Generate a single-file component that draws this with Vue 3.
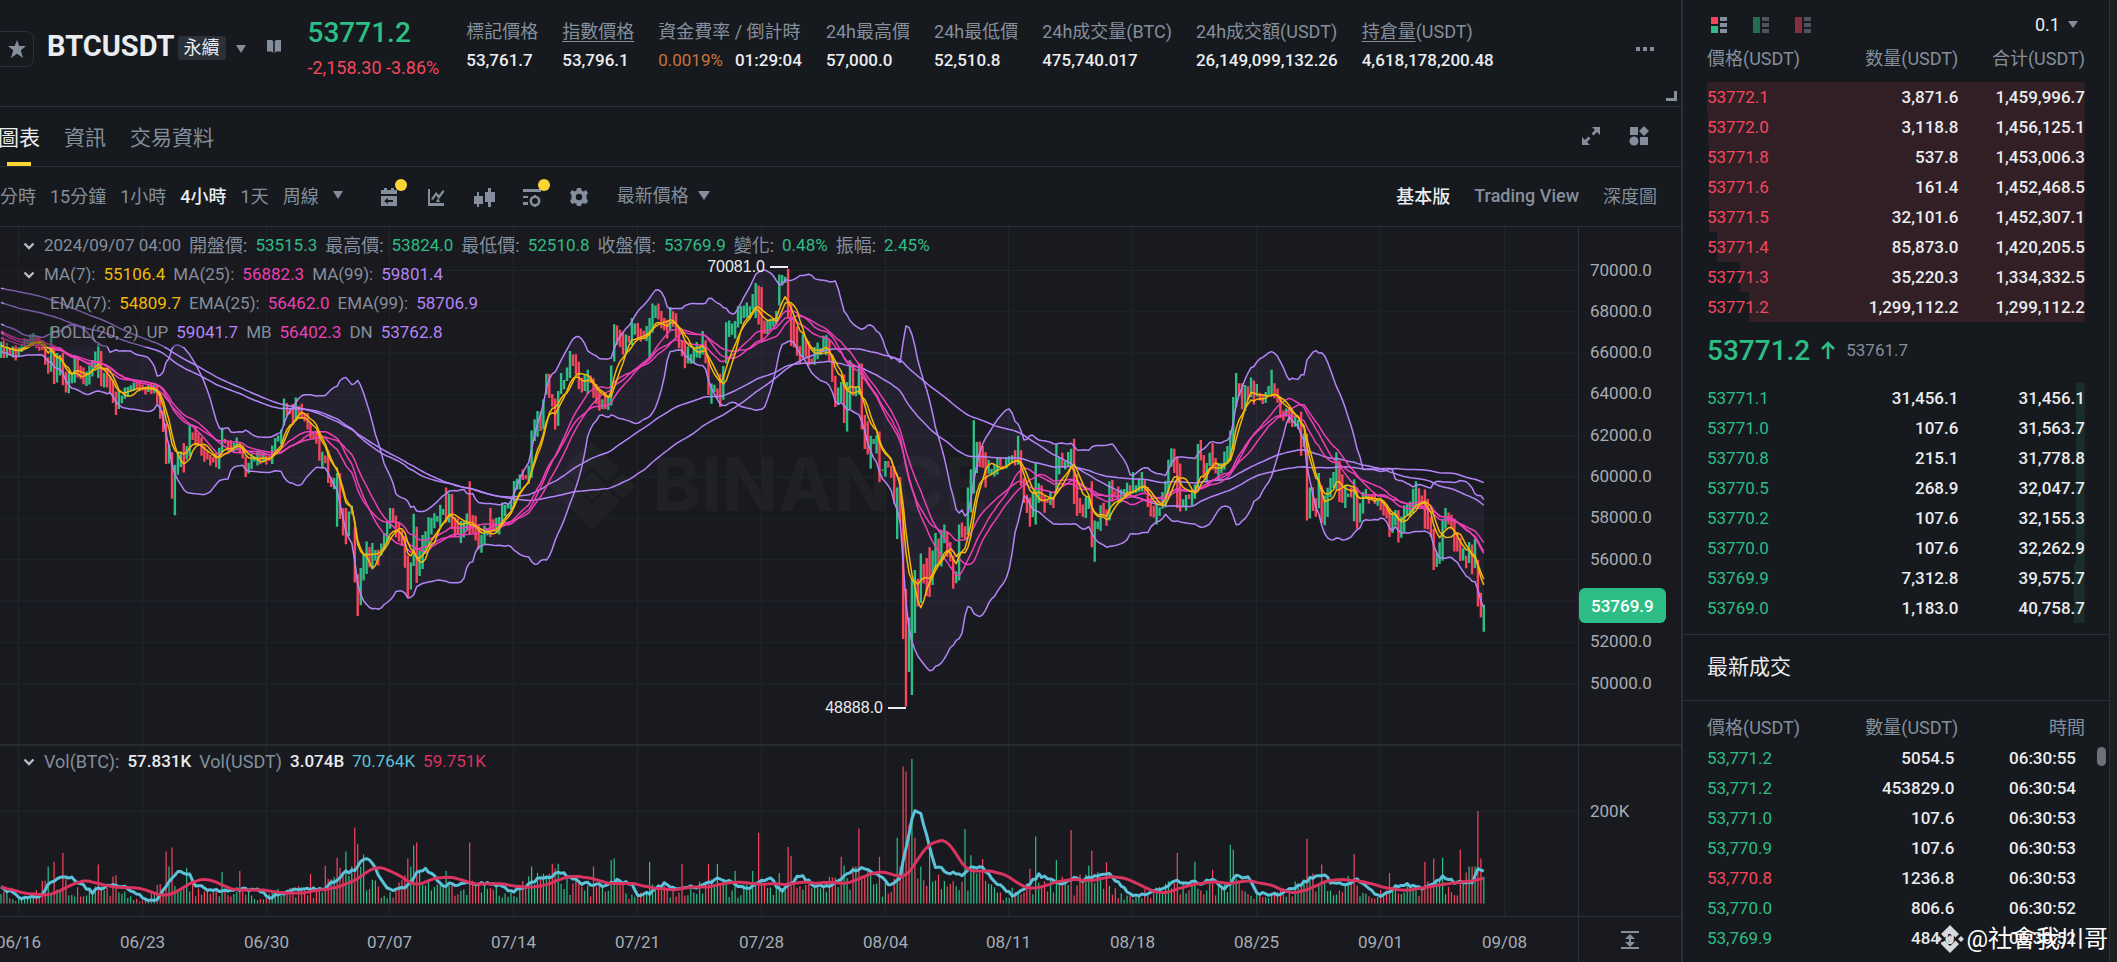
<template>
  <div class="page">
    <main class="market">
      <header class="ticker">
        <button type="button" class="ticker__star" aria-label="收藏">
          <svg width="18" height="18" viewBox="0 0 18 18"><path d="M9 0l2.300 6H18l-5.200 4.200L15 18 9 13.800 3 18l2.200-7.800L0 6h6.700z" /></svg>
        </button>
        <h1>BTCUSDT</h1>
        <span class="ticker__tag">永續</span>
        <button type="button" class="ticker__caret" aria-label="選擇合約">
          <svg width="10" height="8" viewBox="0 0 10 8"><path d="M0 0h10L5 8z" /></svg>
        </button>
        <button type="button" class="ticker__book" aria-label="合約說明">
          <svg width="14" height="13" viewBox="0 0 14 13"><path d="M0 0h4.500l1.700 1v12L4.500 11.500H0zM14 0H9.500L7.800 1v12l1.700-1.500H14z" /></svg>
        </button>
        <div class="ticker__price">
          <strong>53771.2</strong>
          <span>-2,158.30 -3.86%</span>
        </div>
        <dl class="ticker__stats">
          <div v-for="stat in stats" :key="stat.label">
            <dt><span :class="{ underline: stat.underline }">{{ stat.label }}</span>{{ stat.unit }}</dt>
            <dd><em v-if="stat.rate">{{ stat.rate }}</em>{{ stat.value }}</dd>
          </div>
        </dl>
        <button type="button" class="ticker__more" aria-label="更多">
          <svg width="18" height="4" viewBox="0 0 18 4"><path d="M0 0h4v4H0zM7 0h4v4H7zM14 0h4v4h-4z" /></svg>
        </button>
        <svg class="ticker__corner" width="11" height="10" viewBox="0 0 11 10"><path d="M8 0h3v10H0V7h8z" /></svg>
      </header>

      <nav class="tabs">
        <button
          v-for="tab in tabs"
          :key="tab"
          type="button"
          :class="{ active: tab === activeTab }"
          @click="activeTab = tab"
        >
          {{ tab }}
        </button>
        <span class="spacer"></span>
        <button type="button" class="tabs__icon" aria-label="全螢幕">
          <svg width="20" height="20" viewBox="0 0 20 20"><path d="M11 1h8v8l-3-3-3.500 3.500-2-2L14 4zM9 19H1v-8l3 3 3.500-3.500 2 2L6 16z" /></svg>
        </button>
        <button type="button" class="tabs__icon" aria-label="版面設定">
          <svg width="20" height="20" viewBox="0 0 20 20"><path d="M1 1h8v8H1zM15 0l5 5-5 5-5-5zM11 11h8v8h-8z" /><circle cx="5" cy="15" r="4.500" /></svg>
        </button>
      </nav>

      <div class="toolbar">
        <button
          v-for="item in intervals"
          :key="item"
          type="button"
          :class="{ active: item === activeInterval }"
          @click="activeInterval = item"
        >
          {{ item }}
        </button>
        <button type="button" class="toolbar__caret" aria-label="更多週期">
          <svg width="10" height="8" viewBox="0 0 10 8"><path d="M0 0h10L5 8z" /></svg>
        </button>
        <div class="toolbar__icons">
          <button type="button" class="dotted" aria-label="回放">
            <svg width="20" height="20" viewBox="0 0 20 20"><path d="M2 3h3V1h3v2h4V1h3v2h3v4H2z" /><path d="M2 9h16v10H2zm3 5l4 3v-2h5v-2H9v-2z" fill-rule="evenodd" /></svg>
          </button>
          <button type="button" aria-label="畫線工具">
            <svg width="20" height="20" viewBox="0 0 20 20"><path d="M2 2h2v14h14v3H2zM5 12l5-7 3 3 4-5 1.500 1.500L13 12l-3-3.500L7 13zM10 15l2-4 2 4z" /></svg>
          </button>
          <button type="button" aria-label="K線類型">
            <svg width="22" height="20" viewBox="0 0 22 20"><path d="M1 9h3V5h2v4h4v8H6v3H4v-3H1zM12 5h3V1h3v4h4v10h-4v5h-3v-5h-3z" /></svg>
          </button>
          <button type="button" class="dotted" aria-label="指標">
            <svg width="20" height="20" viewBox="0 0 20 20"><path d="M1 2h18v3H1zM1 9h5v2H1zM1 15h5v3H1z" /><circle cx="13" cy="14" r="4.200" fill="none" stroke="currentColor" stroke-width="2.600" /><path d="M12 8h2v3h-2zM12 17h2v3h-2z" /></svg>
          </button>
          <button type="button" aria-label="設定">
            <svg width="20" height="20" viewBox="0 0 20 20"><path fill-rule="evenodd" d="M8 1h4l.6 2.500 2 .9L17 3l2 3-1.500 2v3.500L19 14l-2 3-2.500-1-1.900.9L12 19H8l-.6-2.100-1.900-.9L3 17l-2-3 1.500-2.500V8L1 6l2-3 2.400 1.400 2-.9zM10 6.800a3.200 3.200 0 1 0 0 6.400 3.200 3.200 0 0 0 0-6.400z" /></svg>
          </button>
        </div>
        <label class="picker">
          <select aria-label="價格類型"><option>最新價格</option><option>標記價格</option></select>
          <svg width="12" height="9" viewBox="0 0 12 9"><path d="M0 0h12L6 9z" /></svg>
        </label>
        <span class="spacer"></span>
        <div class="toolbar__views">
          <button
            v-for="view in views"
            :key="view"
            type="button"
            :class="{ active: view === activeView }"
            @click="activeView = view"
          >
            {{ view }}
          </button>
        </div>
      </div>

      <section class="chart">
        <svg class="chart__svg" viewBox="0 0 1681 735">
          <g class="grid">
            <line v-for="tick in priceTicks" :key="tick" x1="0" x2="1578" :y1="priceY(tick)" :y2="priceY(tick)" />
            <line v-for="day in days" :key="day.label" :x1="day.x" :x2="day.x" y1="0" y2="689" />
            <line x1="0" x2="1578" y1="584" y2="584" />
          </g>
          <g class="brand">
            <path d="M592 214l28 28-13 13-15-15-15 15-13-13zM592 244l15 15-15 15-15-15zM549 259l13-13 13 13-13 13zM609 259l13-13 14 13-14 13zM592 303l-28-28 13-13 15 15 15-15 13 13z" />
            <text x="652" y="284">BINANCE</text>
          </g>

          <path class="band" :d="bandPath" />
          <path class="candle up" :d="candlePaths.up" />
          <path class="candle down" :d="candlePaths.down" />
          <path v-for="(line, index) in overlays" :key="index" class="overlay" :class="line.color" :d="line.d" />

          <g class="extreme">
            <line x1="770" x2="788" y1="40" y2="40" />
            <text x="765" y="45">70081.0</text>
            <line x1="888" x2="906" y1="481" y2="481" />
            <text x="883" y="486">48888.0</text>
          </g>

          <path class="volume up" :d="volumePaths.up" />
          <path class="volume down" :d="volumePaths.down" />
          <path class="volume-line fast" :d="linePath(volumeFast, volumeY)" />
          <path class="volume-line slow" :d="linePath(volumeSlow, volumeY)" />

          <line class="frame thick" x1="0" x2="1681" y1="518" y2="518" />
          <line class="frame" x1="0" x2="1681" y1="689.5" y2="689.5" />
          <line class="frame" x1="1578.5" x2="1578.5" y1="0" y2="735" />

          <g class="axis">
            <text v-for="tick in priceLabels" :key="tick" x="1590" :y="priceY(tick) + 5">{{ tick }}00.0</text>
            <text x="1590" y="590">200K</text>
            <text v-for="day in days" :key="day.label" class="day" :x="day.x" y="721">{{ day.label }}</text>
          </g>
          <rect class="last-box" x="1579" y="361" width="87" height="35" rx="6" />
          <text class="last-text" x="1591" y="385">53769.9</text>
          <path class="fit" d="M1621 704h18v2h-18zM1621 720h18v2h-18zM1630 707l5 5h-4v3h4l-5 5-5-5h4v-3h-4z" />
        </svg>

        <div class="legend">
          <div v-for="(row, index) in legendRows" :key="index" class="legend__row" :class="row.kind">
            <button v-if="row.kind !== 'nested'" type="button" aria-label="收合">
              <svg width="12" height="8" viewBox="0 0 12 8"><path d="M1.500 1.500L6 6l4.500-4.500" /></svg>
            </button>
            <span v-for="(part, i) in row.parts" :key="i" :class="part[1]">{{ part[0] }}</span>
          </div>
        </div>
        <div class="legend legend--volume">
          <div class="legend__row">
            <button type="button" aria-label="收合">
              <svg width="12" height="8" viewBox="0 0 12 8"><path d="M1.500 1.500L6 6l4.500-4.500" /></svg>
            </button>
            <span v-for="(part, i) in volumeLegend" :key="i" :class="part[1]">{{ part[0] }}</span>
          </div>
        </div>
      </section>
    </main>

    <aside class="side">
      <section class="book">
        <div class="book__bar">
          <button type="button" aria-label="買賣盤">
            <svg width="16" height="16" viewBox="0 0 16 16"><path fill="#f6465d" d="M0 0h7v7H0z" /><path fill="#2ebd85" d="M0 9h7v7H0z" /><path d="M9 0h7v4H9zM9 6h7v4H9zM9 12h7v4H9z" /></svg>
          </button>
          <button type="button" class="dim" aria-label="買盤">
            <svg width="16" height="16" viewBox="0 0 16 16"><path fill="#2ebd85" d="M0 0h7v16H0z" /><path d="M9 0h7v4H9zM9 6h7v4H9zM9 12h7v4H9z" /></svg>
          </button>
          <button type="button" class="dim" aria-label="賣盤">
            <svg width="16" height="16" viewBox="0 0 16 16"><path fill="#f6465d" d="M0 0h7v16H0z" /><path d="M9 0h7v4H9zM9 6h7v4H9zM9 12h7v4H9z" /></svg>
          </button>
          <span class="spacer"></span>
          <label class="picker picker--light">
            <select aria-label="精度"><option>0.1</option><option>1</option></select>
            <svg width="10" height="7" viewBox="0 0 10 7"><path d="M0 0h10L5 7z" /></svg>
          </label>
        </div>
        <table class="asks">
          <thead>
            <tr><th>價格(USDT)</th><th>数量(USDT)</th><th>合计(USDT)</th></tr>
          </thead>
          <tbody>
            <tr v-for="row in asks" :key="row[0]" :style="{ '--depth': depth(row[2]) }">
              <td>{{ row[0] }}</td><td>{{ row[1] }}</td><td>{{ row[2] }}</td>
            </tr>
          </tbody>
        </table>
        <p class="book__last">
          <strong>53771.2</strong>
          <svg width="14" height="18" viewBox="0 0 14 18"><path d="M7 18V2M1 8l6-6 6 6" /></svg>
          <span>53761.7</span>
        </p>
        <table class="bids">
          <tbody>
            <tr v-for="row in bids" :key="row[0]" :style="{ '--depth': depth(row[2]) }">
              <td>{{ row[0] }}</td><td>{{ row[1] }}</td><td>{{ row[2] }}</td>
            </tr>
          </tbody>
        </table>
      </section>
      <section class="trades">
        <h2>最新成交</h2>
        <table>
          <thead>
            <tr><th>價格(USDT)</th><th>數量(USDT)</th><th>時間</th></tr>
          </thead>
          <tbody>
            <tr v-for="(row, index) in trades" :key="index" :class="{ sell: row[3] }">
              <td>{{ row[0] }}</td><td>{{ row[1] }}</td><td>{{ row[2] }}</td>
            </tr>
          </tbody>
        </table>
        <span class="trades__thumb"></span>
      </section>
    </aside>

    <div class="stamp">
      <svg width="28" height="28" viewBox="0 0 28 28"><path d="M14 0l9 9-3.500 3.500L14 7l-5.500 5.500L5 9zM14 10l4 4-4 4-4-4zM3 11l3 3-3 3-3-3zM25 11l3 3-3 3-3-3zM14 28l-9-9 3.500-3.500L14 21l5.500-5.500L23 19z" /></svg>
      <span>@社會我川哥</span>
    </div>
  </div>
</template>

<script setup>
import { ref } from 'vue';

const tabs = ['圖表', '資訊', '交易資料'];
const activeTab = ref('圖表');
const intervals = ['分時', '15分鐘', '1小時', '4小時', '1天', '周線'];
const activeInterval = ref('4小時');
const views = ['基本版', 'Trading View', '深度圖'];
const activeView = ref('基本版');

const stats = [
  { label: '標記價格', value: '53,761.7' },
  { label: '指數價格', value: '53,796.1', underline: true },
  { label: '資金費率 / 倒計時', rate: '0.0019%', value: '01:29:04' },
  { label: '24h最高價', value: '57,000.0' },
  { label: '24h最低價', value: '52,510.8' },
  { label: '24h成交量(BTC)', value: '475,740.017' },
  { label: '24h成交額(USDT)', value: '26,149,099,132.26' },
  { label: '持倉量', unit: '(USDT)', value: '4,618,178,200.48', underline: true },
];

const legendRows = [
  {
    kind: 'quote',
    parts: [
      ['2024/09/07 04:00'], ['開盤價:', 'label'], ['53515.3', 'green'], ['最高價:', 'label'], ['53824.0', 'green'],
      ['最低價:', 'label'], ['52510.8', 'green'], ['收盤價:', 'label'], ['53769.9', 'green'], ['變化:', 'label'], ['0.48%', 'green'],
      ['振幅:', 'label'], ['2.45%', 'green'],
    ],
  },
  { kind: 'indicator', parts: [['MA(7):'], ['55106.4', 'yellow'], ['MA(25):'], ['56882.3', 'pink'], ['MA(99):'], ['59801.4', 'purple']] },
  { kind: 'nested', parts: [['EMA(7):'], ['54809.7', 'yellow'], ['EMA(25):'], ['56462.0', 'pink'], ['EMA(99):'], ['58706.9', 'purple']] },
  { kind: 'nested', parts: [['BOLL(20, 2)'], ['UP'], ['59041.7', 'purple'], ['MB'], ['56402.3', 'pink'], ['DN'], ['53762.8', 'purple']] },
];
const volumeLegend = [
  ['Vol(BTC):', 'label'], ['57.831K', 'white'], ['Vol(USDT)', 'label'], ['3.074B', 'white'], ['70.764K', 'cyan'], ['59.751K', 'crimson'],
];

const asks = [
  ['53772.1', '3,871.6', '1,459,996.7'],
  ['53772.0', '3,118.8', '1,456,125.1'],
  ['53771.8', '537.8', '1,453,006.3'],
  ['53771.6', '161.4', '1,452,468.5'],
  ['53771.5', '32,101.6', '1,452,307.1'],
  ['53771.4', '85,873.0', '1,420,205.5'],
  ['53771.3', '35,220.3', '1,334,332.5'],
  ['53771.2', '1,299,112.2', '1,299,112.2'],
];
const bids = [
  ['53771.1', '31,456.1', '31,456.1'],
  ['53771.0', '107.6', '31,563.7'],
  ['53770.8', '215.1', '31,778.8'],
  ['53770.5', '268.9', '32,047.7'],
  ['53770.2', '107.6', '32,155.3'],
  ['53770.0', '107.6', '32,262.9'],
  ['53769.9', '7,312.8', '39,575.7'],
  ['53769.0', '1,183.0', '40,758.7'],
];
const trades = [
  ['53,771.2', '5054.5', '06:30:55'],
  ['53,771.2', '453829.0', '06:30:54'],
  ['53,771.0', '107.6', '06:30:53'],
  ['53,770.9', '107.6', '06:30:53'],
  ['53,770.8', '1236.8', '06:30:53', true],
  ['53,770.0', '806.6', '06:30:52'],
  ['53,769.9', '484.0', '06:30:52'],
];

const toNumber = (text) => Number(text.replace(/,/g, ''));
const deepest = toNumber(asks[0][2]);
const depth = (total) => `${(toNumber(total) / deepest) * 100}%`;

// prices are in hundreds of USDT, one bar is 4 hours
const BARS = 504;
const HISTORY = 110;
const priceTicks = [700, 680, 660, 640, 620, 600, 580, 560, 540, 520, 500];
const priceLabels = priceTicks.filter((tick) => tick !== 540);
const dayLabels = ['06/16', '06/23', '06/30', '07/07', '07/14', '07/21', '07/28', '08/04', '08/11', '08/18', '08/25', '09/01', '09/08'];
const days = dayLabels.map((label, index) => ({ label, x: 18.5 + Math.round(index * 123.8) }));

const barX = (index) => index * 2.948 + 1;
const priceY = (price) => 43.5 + (700 - price) * 2.066;
const volumeY = (volume) => 676.5 - volume * 0.463;

const closeAnchors = [
  [-110, 686], [-95, 688], [-80, 706], [-60, 709], [-48, 694], [-30, 692], [-24, 684], [-18, 672], [-10, 668], [-5, 665],
  [0, 662], [5, 660.6], [8, 665.5], [11, 668], [14, 660.6], [16, 653], [17, 668], [18, 651], [20, 658], [22, 643], [24, 647], [25, 656],
  [27, 649], [29, 648], [32, 658], [33, 661], [34, 648], [36, 647], [39, 635.6], [41, 639], [43, 643], [48, 643], [52, 642], [54, 632], [55, 623],
  [56, 608], [57, 612], [58, 594], [59, 604], [61, 613], [62, 609], [64, 621], [66, 618], [68, 613], [71, 608], [73, 607], [75, 618], [78, 614.6],
  [81, 616], [83, 603], [85, 608], [87, 610], [91, 609], [93, 617], [95, 621], [96, 632], [97, 634], [99, 627], [100, 634], [103, 628], [105, 622],
  [107, 619], [108, 609], [110, 608], [111, 598], [113, 600], [114, 601], [115, 581], [117, 571], [118, 582], [119, 583], [120, 553], [121, 538],
  [122, 553], [124, 563], [127, 563], [129, 566], [132, 582], [134, 576], [136, 568], [138, 547], [139, 558], [140, 571], [141, 552], [143, 566],
  [145, 574], [148, 580], [151, 584], [152, 590], [153, 580], [155, 573], [158, 580], [160, 577], [162, 567], [165, 576], [168, 576], [170, 585],
  [173, 587], [174, 597], [176, 602], [179, 600], [180, 619], [182, 629], [183, 626], [185, 645], [188, 629], [189, 642], [191, 647], [193, 657],
  [195, 650], [197, 643], [199, 648], [200, 647], [202, 636], [206, 637], [207, 650], [208, 669], [211, 664], [213, 666], [215, 672], [218, 668],
  [220, 674], [222, 681], [224, 674], [226, 670], [227, 679], [230, 666], [232, 657], [235, 660], [238, 667], [239, 657], [240, 641], [242, 642],
  [244, 641], [245, 653], [246, 668], [249, 673], [250, 679], [254, 681], [256, 689], [257, 678], [258, 673], [260, 673], [263, 680], [264, 694],
  [266, 696], [267, 678], [269, 668], [271, 661], [272, 666], [274, 657], [275, 656], [278, 662], [280, 665], [282, 648], [283, 639], [285, 645],
  [286, 629], [287, 636], [288, 650], [289, 642], [291, 646], [292, 626], [294, 615], [295, 616], [297, 618], [298, 603], [300, 606], [302, 605],
  [303, 590], [304, 592], [305, 581], [306, 531], [307, 514], [308, 524], [309, 539], [310, 547], [311, 543], [312, 555], [315, 550], [316, 560],
  [317, 568], [318, 561], [320, 573], [322, 561], [323, 550], [324, 552], [325, 571], [327, 571], [328, 587], [330, 608], [331, 613], [334, 602],
  [337, 606], [340, 605], [343, 611], [345, 609], [346, 598], [347, 587], [349, 584], [352, 595], [354, 588], [357, 587], [358, 607], [361, 606],
  [363, 613], [364, 597], [365, 587], [367, 581], [369, 591], [370, 572], [371, 574], [373, 582], [375, 579], [376, 594], [379, 591], [382, 594],
  [385, 597], [387, 597], [389, 588], [390, 584], [392, 582], [394, 588], [395, 595], [396, 606], [397, 610], [399, 603], [400, 587], [402, 592],
  [405, 593], [406, 610], [407, 610], [408, 602], [410, 611], [412, 602], [414, 605], [416, 611], [417, 620], [418, 637], [419, 645], [421, 637],
  [422, 643], [424, 642], [425, 636], [426, 641], [428, 638], [431, 643], [433, 639], [434, 631], [437, 630], [438, 627], [440, 627], [441, 616],
  [442, 618], [443, 585], [444, 593], [446, 586], [447, 597], [448, 581], [450, 590], [452, 598], [453, 608], [455, 590], [458, 592], [459, 596],
  [460, 580], [461, 587], [462, 591], [467, 589], [470, 581], [471, 574], [473, 584], [474, 573], [476, 584], [478, 586], [480, 592], [483, 588],
  [484, 579], [485, 576], [486, 560], [488, 564], [489, 579], [490, 580], [492, 576], [493, 568], [495, 561], [497, 560], [498, 566], [499, 557],
  [500, 560], [501, 542], [502, 534], [503, 537.7],
];

// bars with long wicks: index -> [high, low]
const wicks = {
  16: [658, 650], 17: [672.7, 651], 18: [664, 645], 22: [651, 641], 33: [664.6, 648], 40: [642, 633], 58: [612, 589.5], 59: [606, 581.5],
  64: [625.6, 610], 75: [624, 612], 83: [610, 600], 96: [638, 625], 100: [638.5, 627], 114: [602, 576], 117: [585, 567.5], 120: [576, 549],
  121: [553, 532.7], 122: [556, 538], 132: [585, 575], 138: [562, 542], 140: [582.3, 557], 141: [576, 548.7], 151: [595, 578], 159: [598, 572],
  162: [577, 565], 166: [585, 571], 185: [650, 640], 188: [638, 623], 193: [661, 648], 208: [674, 656], 214: [677, 664], 220: [677, 657],
  221: [684, 670], 227: [682.4, 671], 244: [650, 634], 246: [675, 655], 256: [694, 677], 258: [692, 666], 264: [698, 683], 267: [700.8, 677],
  268: [684, 663.5], 280: [668.7, 659], 287: [646, 622], 288: [656.6, 633], 291: [655, 640], 292: [655, 623], 294: [627, 611], 295: [620, 604],
  304: [595, 570], 305: [600, 578], 306: [585, 521.7], 307: [546, 488.9], 308: [532, 505.6], 309: [550, 494.6], 310: [555, 524.6], 312: [563, 539],
  315: [566, 542], 320: [577, 568], 323: [562, 546], 325: [577, 550], 328: [595, 572], 330: [627.5, 592], 331: [617, 602], 334: [612, 595],
  345: [620, 606], 349: [590, 576], 351: [607, 577], 358: [616, 592], 364: [618.6, 587], 371: [579, 559], 370: [598, 566], 376: [598, 579],
  384: [602.5, 592], 387: [602.5, 593], 392: [587, 577], 397: [614, 605], 399: [610, 585], 406: [616, 593], 407: [618, 608], 419: [650.4, 634],
  431: [652, 640], 426: [645, 639], 443: [621, 579], 448: [596, 577.8], 453: [612, 594], 454: [608, 588], 459: [599, 578.6], 460: [595, 575],
  471: [585, 571], 480: [598, 585], 483: [594, 575], 486: [575, 555], 490: [585, 575], 500: [570, 556], 501: [560, 537.4], 502: [544, 532], 503: [538.2, 525.1],
};

const volumeAnchors = [
  [0, 35], [7, 13], [13, 15], [17, 48], [22, 60], [27, 44], [31, 24], [35, 37], [39, 42], [45, 26], [49, 9], [53, 9], [56, 37], [60, 69], [64, 64],
  [66, 40], [72, 27], [80, 30], [87, 30], [91, 13], [98, 28], [104, 33], [109, 30], [113, 48], [117, 69], [120, 69], [122, 93], [124, 97], [126, 87],
  [129, 48], [132, 28], [137, 33], [141, 66], [144, 74], [146, 66], [150, 40], [158, 44], [167, 42], [174, 26], [182, 51], [190, 66], [197, 44],
  [205, 37], [209, 50], [214, 40], [216, 19], [220, 22], [225, 44], [229, 33], [238, 37], [244, 55], [254, 30], [258, 51], [261, 53], [265, 26],
  [271, 62], [276, 38], [282, 40], [286, 60], [291, 76], [297, 66], [302, 38], [305, 58], [307, 120], [309, 184], [310, 201], [312, 194],
  [314, 145], [317, 80], [321, 69], [326, 60], [329, 76], [333, 78], [338, 44], [343, 17], [347, 30], [352, 62], [360, 40], [364, 56], [367, 48],
  [370, 58], [376, 62], [380, 37], [384, 15], [390, 24], [399, 48], [407, 44], [411, 51], [415, 31], [419, 58], [423, 58], [426, 22], [433, 20],
  [440, 37], [444, 53], [449, 64], [451, 45], [457, 39], [460, 51], [464, 33], [468, 13], [473, 37], [477, 40], [483, 33], [489, 58], [494, 44],
  [499, 48], [501, 73], [503, 71],
];

// volume bursts: index -> volume in K, negative for a falling bar
const bursts = {
  16: 80, 18: -90, 21: -109, 33: -84, 38: -58, 39: -61, 56: -112, 58: -121, 63: 77, 75: 68, 81: -70, 105: -64, 110: -81, 114: -99, 117: 112,
  120: -164, 121: -129, 123: 106, 138: -97, 140: 125, 141: -132, 151: 70, 159: -132, 180: 80, 187: -86, 189: 86, 201: -80, 207: 94, 208: 97,
  220: 90, 231: -86, 240: -86, 243: 86, 249: 70, 255: 70, 257: -153, 264: 66, 267: -122, 268: -103, 285: -101, 286: 82, 291: -162, 298: -101,
  304: 142, 306: -296, 307: -285, 308: -170, 309: 312, 310: -142, 315: 123, 327: 161, 329: 104, 333: -96, 351: 145, 358: 94, 363: -158, 369: 82,
  370: -114, 375: -89, 399: -109, 405: 90, 411: -73, 417: 127, 418: 116, 443: -140, 448: -84, 459: -107, 471: -66, 483: -90, 486: -97, 489: 99,
  495: -116, 501: -200, 502: -97, 503: 57.8,
};

function createNoise(seed) {
  let state = seed;
  return () => {
    state = (state * 16807) % 2147483647;
    return state / 2147483647;
  };
}

function interpolate(anchors, from, to) {
  const values = [];
  let cursor = 0;
  for (let i = from; i < to; i += 1) {
    while (cursor < anchors.length - 2 && anchors[cursor + 1][0] <= i) cursor += 1;
    const [x1, y1] = anchors[cursor];
    const [x2, y2] = anchors[cursor + 1];
    values.push(y1 + ((y2 - y1) * (i - x1)) / (x2 - x1));
  }
  return values;
}

function movingAverage(values, size) {
  return values.map((_, index) => {
    const part = values.slice(Math.max(0, index - size + 1), index + 1);
    return part.reduce((sum, value) => sum + value, 0) / part.length;
  });
}

function exponentialAverage(values, size) {
  const k = 2 / (size + 1);
  let last = values[0];
  return values.map((value) => {
    last += (value - last) * k;
    return last;
  });
}

function deviation(values, size) {
  const mean = movingAverage(values, size);
  return values.map((_, index) => {
    const part = values.slice(Math.max(0, index - size + 1), index + 1);
    return Math.sqrt(part.reduce((sum, value) => sum + (value - mean[index]) ** 2, 0) / part.length);
  });
}

function linePath(values, scale) {
  return values.map((value, index) => `${index ? 'L' : 'M'}${barX(index).toFixed(1)} ${scale(value).toFixed(1)}`).join('');
}

const noise = createNoise(4127);
const closes = interpolate(closeAnchors, -HISTORY, BARS).map((value) => value + (noise() - 0.5) * 2.4);
const visible = (values) => values.slice(HISTORY);

const middle = movingAverage(closes, 20);
const spread = deviation(closes, 20);
const upper = visible(middle.map((value, index) => value + spread[index] * 2));
const lower = visible(middle.map((value, index) => value - spread[index] * 2));

const overlays = [
  { color: 'purple', values: upper },
  { color: 'purple', values: lower },
  { color: 'purple', values: visible(movingAverage(closes, 99)) },
  { color: 'purple', values: visible(exponentialAverage(closes, 99)) },
  { color: 'pink', values: visible(middle) },
  { color: 'pink', values: visible(movingAverage(closes, 25)) },
  { color: 'pink', values: visible(exponentialAverage(closes, 25)) },
  { color: 'yellow', values: visible(movingAverage(closes, 7)) },
  { color: 'yellow', values: visible(exponentialAverage(closes, 7)) },
].map((line) => ({ color: line.color, d: linePath(line.values, priceY) }));

const lowerBack = lower.map((value, index) => `L${barX(index).toFixed(1)} ${priceY(value).toFixed(1)}`).reverse().join('');
const bandPath = `${linePath(upper, priceY)}${lowerBack}Z`;

const candlePaths = { up: '', down: '' };
const volumePaths = { up: '', down: '' };
const volumeFast = interpolate(volumeAnchors, 0, BARS).map((value) => value + (noise() - 0.5) * 7);
const volumeSlow = movingAverage(volumeFast, 14);

for (let i = 0; i < BARS; i += 1) {
  const open = closes[i + HISTORY - 1];
  const close = closes[i + HISTORY];
  const reach = 2 + Math.abs(volumeFast[i]) * 0.07;
  const [high, low] = wicks[i] || [Math.max(open, close) + noise() * reach, Math.min(open, close) - noise() * reach];
  const rising = bursts[i] ? bursts[i] > 0 : close >= open;
  const x = barX(i).toFixed(1);
  candlePaths[close >= open ? 'up' : 'down'] += `M${x} ${priceY(high).toFixed(1)}V${priceY(low).toFixed(1)}`;

  const ahead = volumeFast[Math.min(i + 3, BARS - 1)];
  const volume = bursts[i] ? Math.abs(bursts[i]) : Math.min(Math.max(ahead * (0.35 + noise() * 0.85), 4), 80);
  volumePaths[rising ? 'up' : 'down'] += `M${x} ${volumeY(volume).toFixed(1)}V676.500`;
}
</script>

<style>
body {
  margin: 0;
  background: #161a1e;
}
</style>

<style scoped>
.page {
  position: relative;
  display: grid;
  grid-template-columns: minmax(0, 1fr) 429px 7px;
  min-height: 100vh;
  overflow: hidden;
  background: #1c1e23;
  color: #eaecef;
  font-family: Roboto, "Noto Sans CJK TC", sans-serif;
  font-size: 17px;
}
button,
select {
  border: 0;
  margin: 0;
  padding: 0;
  background: none;
  color: #848e9c;
  font: inherit;
  white-space: nowrap;
  cursor: pointer;
}
svg {
  display: block;
  flex: none;
  fill: currentColor;
}
.spacer {
  flex: 1;
}
.market {
  min-width: 0;
  background: #161a1e;
}

.ticker {
  position: relative;
  box-sizing: border-box;
  display: flex;
  align-items: center;
  height: 107px;
  border-bottom: 1px solid #2b3139;
  padding: 0 27px 14px 0;
}
.ticker__star {
  box-sizing: border-box;
  display: grid;
  place-items: center;
  width: 34px;
  height: 36px;
  margin-top: 5px;
  border: 1px solid #2b3139;
  border-left: 0;
  border-radius: 0 8px 8px 0;
}
.ticker h1 {
  margin: 0 3px 0 13px;
  font-size: 29px;
  line-height: 32px;
}
.ticker__tag {
  margin-top: 4px;
  border-radius: 3px;
  padding: 0 6px;
  background: #2b3139;
  font-size: 18px;
  line-height: 24px;
  white-space: nowrap;
}
.ticker__caret {
  margin: 5px 0 0 10px;
}
.ticker__book {
  margin: 0 27px 0 21px;
}
.ticker__price {
  display: grid;
  padding-top: 8px;
  white-space: nowrap;
}
.ticker__price strong {
  color: #2ebd85;
  font-size: 28px;
  font-weight: 500;
  line-height: 36px;
}
.ticker__price span {
  color: #f6465d;
  font-size: 18px;
  line-height: 34px;
}
.ticker__stats {
  display: flex;
  flex: 1;
  gap: 24px;
  min-width: 0;
  margin: 0 0 0 27px;
  line-height: 28px;
  white-space: nowrap;
}
.ticker__stats dt {
  color: #848e9c;
  font-size: 18px;
}
.ticker__stats dd {
  margin: 0;
  font-weight: 500;
}
.ticker__stats em {
  margin-right: 12px;
  color: #c9743a;
  font-style: normal;
  font-weight: 400;
}
.underline {
  text-decoration: underline;
  text-decoration-thickness: 1px;
  text-underline-offset: 3px;
}
.ticker__more {
  margin-top: 5px;
}
.ticker__corner {
  position: absolute;
  right: 4px;
  bottom: 5px;
  color: #848e9c;
}

.tabs {
  box-sizing: border-box;
  display: flex;
  gap: 24px;
  height: 60px;
  border-bottom: 1px solid #2b3139;
  padding-right: 32px;
}
.tabs button {
  position: relative;
  padding-bottom: 1px;
  font-size: 21px;
}
.tabs button:first-child {
  margin-left: -2px;
}
.tabs button.active {
  color: #eaecef;
}
.tabs button.active::after {
  position: absolute;
  bottom: 0;
  left: 9px;
  width: 24px;
  height: 4px;
  background: #fcd535;
  content: "";
}
.tabs__icon {
  margin-left: 4px;
}

.toolbar {
  box-sizing: border-box;
  display: flex;
  align-items: center;
  gap: 14px;
  height: 60px;
  border-bottom: 1px solid #2b3139;
  padding: 0 24px 3px 0;
  font-size: 18px;
}
.toolbar button.active {
  color: #eaecef;
  font-weight: 500;
}
.toolbar__icons {
  display: flex;
  gap: 27px;
  margin: 4px 14px 0 22px;
}
.dotted {
  position: relative;
}
.dotted::after {
  position: absolute;
  top: -8px;
  right: -8px;
  width: 12px;
  height: 12px;
  border-radius: 50%;
  background: #fcd535;
  content: "";
}
.toolbar__views {
  display: flex;
  gap: 24px;
}
.toolbar__views button:nth-child(2) {
  font-weight: 500;
}
.picker {
  display: flex;
  align-items: center;
  gap: 9px;
  color: #848e9c;
}
.picker select {
  appearance: none;
  font-size: 18px;
}
.picker--light select {
  width: 24px;
  color: #eaecef;
}

.chart {
  position: relative;
  background: #191a1f;
}
.chart__svg {
  width: 100%;
  height: auto;
}
.grid line {
  stroke: #20252a;
}
.brand {
  fill: #1f2125;
}
.brand text {
  font-family: Inter, sans-serif;
  font-size: 74px;
  font-weight: 700;
}
.band {
  fill: rgba(179, 133, 248, 0.07);
}
.candle {
  fill: none;
  stroke-width: 2.4;
}
.volume {
  fill: none;
  stroke-width: 1.2;
}
.up {
  stroke: #2ebd85;
}
.down {
  stroke: #f6465d;
}
.overlay {
  fill: none;
  stroke-width: 1.5;
  stroke-linejoin: round;
}
.overlay.yellow {
  stroke: #f0b90b;
}
.overlay.pink {
  stroke: #eb40b5;
}
.overlay.purple {
  stroke: #b385f8;
}
.extreme line {
  stroke: #eaecef;
  stroke-width: 2;
}
.extreme text {
  fill: #eaecef;
  font-family: "Liberation Sans", sans-serif;
  font-size: 16px;
  text-anchor: end;
}
.volume-line {
  fill: none;
  stroke-linejoin: round;
  stroke-width: 3;
}
.volume-line.fast {
  stroke: #5bc2d9;
}
.volume-line.slow {
  stroke: #d9345f;
}
.frame {
  stroke: #2b3139;
}
.frame.thick {
  stroke: #262c30;
  stroke-width: 2;
}
.axis text {
  fill: #a7acb5;
  font-size: 17px;
}
.axis .day {
  text-anchor: middle;
}
.last-box {
  fill: #2ebd85;
}
.last-text {
  fill: #fff;
  font-size: 17px;
  font-weight: 500;
}
.fit {
  fill: #848e9c;
}

.legend {
  position: absolute;
  top: 4px;
  left: 4px;
  color: #848e9c;
  line-height: 29px;
  white-space: nowrap;
}
.legend--volume {
  top: 520px;
}
.legend__row {
  display: flex;
  align-items: center;
  gap: 8px;
  width: fit-content;
  height: 29px;
  padding-left: 19px;
}
.legend__row.indicator,
.legend__row.nested {
  background: rgba(25, 26, 31, 0.4);
}
.legend__row.nested {
  padding-left: 46px;
}
.legend__row button {
  width: 13px;
}
.legend__row svg {
  fill: none;
  stroke: #b7bdc6;
  stroke-width: 2.4;
}
.label {
  font-size: 18px;
}
.green {
  color: #2ebd85;
}
.yellow {
  color: #f0b90b;
}
.pink {
  color: #eb40b5;
}
.purple {
  color: #b385f8;
}
.white {
  color: #eaecef;
  font-weight: 500;
}
.cyan {
  color: #5bc2d9;
}
.crimson {
  color: #d9345f;
}

.side {
  border-right: 1px solid #2b3139;
  border-left: 2px solid #2b3139;
  background: #161a1e;
}
.book {
  border-bottom: 1px solid #2b3139;
  padding: 9px 24px 11px;
}
.book__bar {
  display: flex;
  align-items: center;
  gap: 26px;
  height: 31px;
  padding: 0 7px 0 4px;
}
.dim {
  opacity: 0.5;
}
table {
  width: 100%;
  border-collapse: collapse;
  table-layout: fixed;
}
th,
td {
  height: 30px;
  padding: 0;
  font-weight: 500;
  text-align: right;
  white-space: nowrap;
}
th {
  color: #848e9c;
  font-size: 18px;
  font-weight: 400;
}
th:first-child,
td:first-child {
  width: 33%;
  font-weight: 400;
  text-align: left;
}
td:first-child {
  color: #2ebd85;
}
.asks th {
  height: 34px;
  padding-bottom: 8px;
}
.asks td:first-child,
.sell td:first-child {
  color: #f6465d;
}
.asks tbody tr {
  background: linear-gradient(to left, rgba(246, 70, 93, 0.12) var(--depth), transparent var(--depth));
}
.bids tr {
  background: linear-gradient(to left, rgba(46, 189, 133, 0.12) var(--depth), transparent var(--depth));
}
.book__last {
  display: flex;
  align-items: center;
  gap: 11px;
  height: 56px;
  margin: 0 0 5px;
  color: #848e9c;
}
.book__last strong {
  color: #2ebd85;
  font-size: 28px;
  font-weight: 500;
}
.book__last svg {
  fill: none;
  stroke: #2ebd85;
  stroke-width: 2.6;
}

.trades {
  position: relative;
}
.trades h2 {
  margin: 0;
  border-bottom: 1px solid #2b3139;
  padding: 0 24px;
  font-size: 21px;
  font-weight: 400;
  line-height: 65px;
}
.trades table {
  width: calc(100% - 48px);
  margin: 8px 24px 0;
}
.trades th {
  height: 34px;
}
.trades td:nth-child(2) {
  padding-right: 4px;
}
.trades td:nth-child(3) {
  padding-right: 9px;
}
.trades__thumb {
  position: absolute;
  top: 112px;
  right: 3px;
  width: 9px;
  height: 19px;
  border-radius: 5px;
  background: #6a707c;
}

.stamp {
  position: absolute;
  right: 9px;
  bottom: 7px;
  display: flex;
  align-items: center;
  gap: 2px;
  color: #fff;
  font-size: 24px;
  line-height: 32px;
}
.stamp svg {
  color: #d7d9dc;
}
</style>
